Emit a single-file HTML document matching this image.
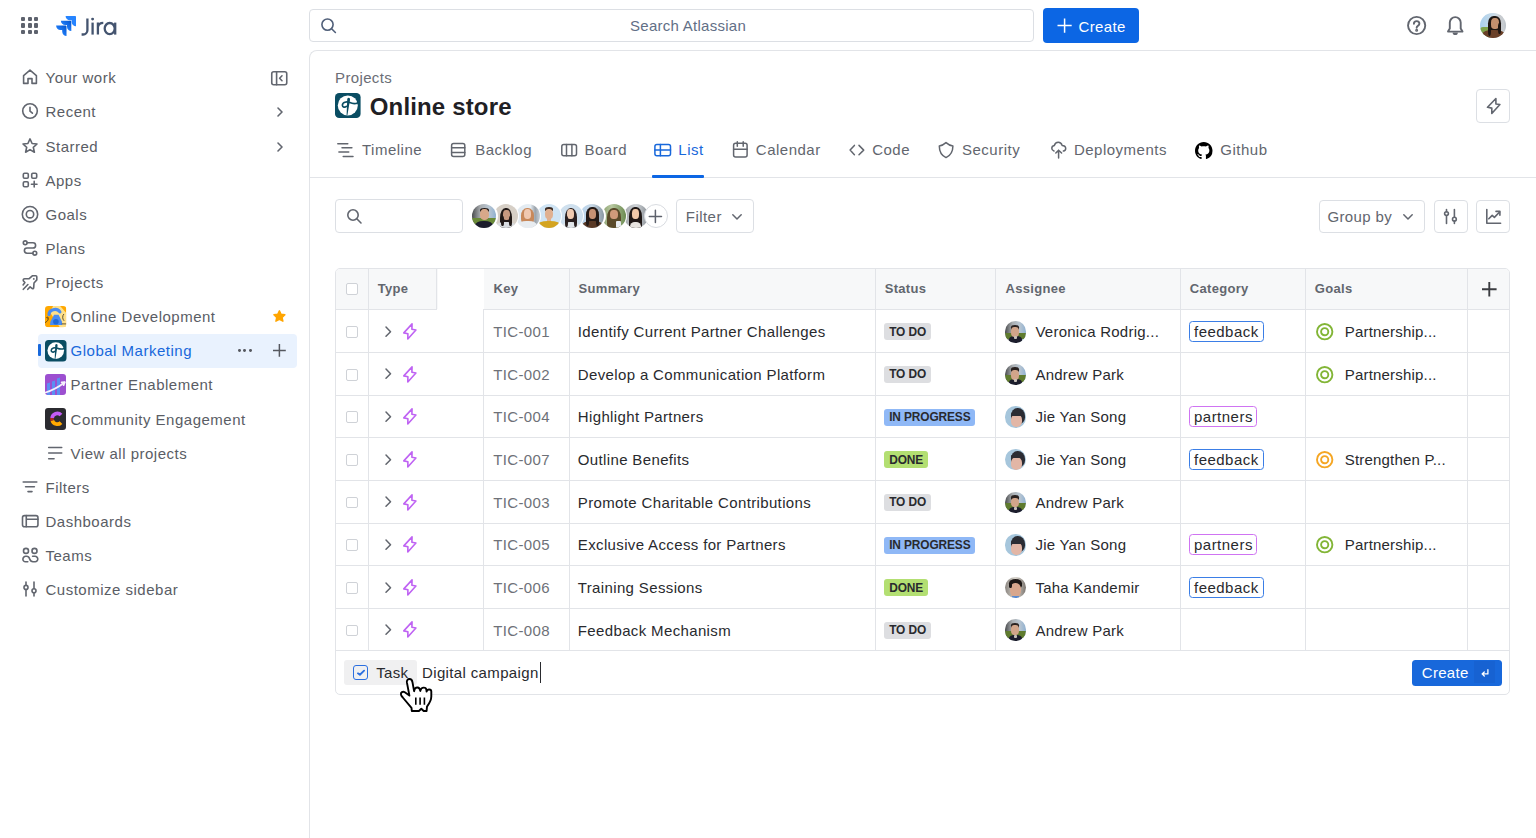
<!DOCTYPE html>
<html><head><meta charset="utf-8">
<style>
*{box-sizing:border-box;margin:0;padding:0}
html,body{width:1536px;height:838px;overflow:hidden;background:#fff;font-family:"Liberation Sans",sans-serif;color:#292a2e}
.a{position:absolute}
.t{position:absolute;white-space:nowrap;line-height:1}
svg{position:absolute;overflow:visible}
.ic{fill:none;stroke:#62666f;stroke-width:1.6;stroke-linecap:round;stroke-linejoin:round}
</style></head><body>

<div class="a" style="left:21.30px;top:17.00px;width:4.20px;height:4.20px;background:#5e636e;border-radius:1.1px"></div>
<div class="a" style="left:21.30px;top:23.45px;width:4.20px;height:4.20px;background:#5e636e;border-radius:1.1px"></div>
<div class="a" style="left:21.30px;top:29.90px;width:4.20px;height:4.20px;background:#5e636e;border-radius:1.1px"></div>
<div class="a" style="left:27.75px;top:17.00px;width:4.20px;height:4.20px;background:#5e636e;border-radius:1.1px"></div>
<div class="a" style="left:27.75px;top:23.45px;width:4.20px;height:4.20px;background:#5e636e;border-radius:1.1px"></div>
<div class="a" style="left:27.75px;top:29.90px;width:4.20px;height:4.20px;background:#5e636e;border-radius:1.1px"></div>
<div class="a" style="left:34.20px;top:17.00px;width:4.20px;height:4.20px;background:#5e636e;border-radius:1.1px"></div>
<div class="a" style="left:34.20px;top:23.45px;width:4.20px;height:4.20px;background:#5e636e;border-radius:1.1px"></div>
<div class="a" style="left:34.20px;top:29.90px;width:4.20px;height:4.20px;background:#5e636e;border-radius:1.1px"></div>
<svg class="" style="left:54.60px;top:15.80px;" width="21" height="20.5" viewBox="0 0 21 20.5">
<defs><linearGradient id="jg1" x1="1" y1="0" x2="0.3" y2="0.7"><stop offset="0" stop-color="#0052cc"/><stop offset="1" stop-color="#2684ff"/></linearGradient></defs>
<path d="M20.2 0 H10.6 a4.3 4.3 0 0 0 4.3 4.3 h1.8 v1.7 a4.3 4.3 0 0 0 4.3 4.3 V0.8 A0.8 0.8 0 0 0 20.2 0z" fill="#2684ff"/>
<path d="M15.5 4.8 H5.9 a4.3 4.3 0 0 0 4.3 4.3 h1.8 v1.7 a4.3 4.3 0 0 0 4.3 4.3 V5.6 A0.8 0.8 0 0 0 15.5 4.8z" fill="url(#jg1)"/>
<path d="M10.7 9.6 H1.1 a4.3 4.3 0 0 0 4.3 4.3 h1.8 v1.7 a4.3 4.3 0 0 0 4.3 4.3 V10.4 A0.8 0.8 0 0 0 10.7 9.6z" fill="url(#jg1)"/>
</svg>
<svg class="" style="left:0.00px;top:0.00px;fill:none;stroke:#44546f;stroke-width:2.3" width="130" height="45" viewBox="0 0 130 45"><path d="M87.4 18.4 V30.2 A4.3 4.3 0 0 1 83.1 34.5 H81.6"/><path d="M92.6 22.6 V34.6"/><circle cx="92.6" cy="19.1" r="1.45" fill="#44546f" stroke="none"/><path d="M97.9 34.6 V22.6 M97.9 27 C98.5 24.2 100.4 22.9 103.3 22.9"/><ellipse cx="109.7" cy="28.6" rx="5.0" ry="5.6"/><path d="M115.2 22.6 V34.6"/></svg>
<div class="a" style="left:309.20px;top:8.70px;width:724.80px;height:33.30px;border:1px solid #dcdfe4;border-radius:4px;background:#fff"></div>
<svg class="ic" style="left:321.00px;top:17.50px;stroke:#505f79" width="16" height="16" viewBox="0 0 16 16"><circle cx="6.5" cy="6.6" r="5.6"/><path d="M10.6 10.7 L14.4 14.5"/></svg>
<div class="t" style="left:630.00px;top:18.40px;font-size:15px;color:#626f86;font-weight:normal;letter-spacing:0.27px;">Search Atlassian</div>
<div class="a" style="left:1043.10px;top:8.20px;width:96.10px;height:34.60px;background:#0c66e4;border-radius:4px"></div>
<svg class="" style="left:1057.00px;top:18.00px;stroke:#fff;stroke-width:1.5;fill:none" width="15.2" height="15.2" viewBox="0 0 15.2 15.2"><path d="M7.6 0.5 V14.7 M0.5 7.6 H14.7"/></svg>
<div class="t" style="left:1078.60px;top:19.30px;font-size:15px;color:#ffffff;font-weight:normal;letter-spacing:0.35px;">Create</div>
<svg class="ic" style="left:1406.90px;top:15.90px;stroke-width:1.9" width="19.3" height="19" viewBox="0 0 19.3 19"><circle cx="9.65" cy="9.5" r="8.6"/><path d="M6.9 7.8 C6.9 6.2 8.1 5.1 9.65 5.1 C11.2 5.1 12.4 6.2 12.4 7.7 C12.4 9.6 9.65 9.9 9.65 11.7"/><circle cx="9.65" cy="14.3" r="0.55" fill="#62666f"/></svg>
<svg class="ic" style="left:1446.70px;top:15.90px;stroke-width:1.9" width="16.5" height="19" viewBox="0 0 16.5 19"><path d="M1 15.6 L2.8 12.6 V6.6 A5.45 5.45 0 0 1 13.7 6.6 V12.6 L15.5 15.6 Z"/><path d="M5.65 16.4 A2.6 2.6 0 0 0 10.85 16.4 Z" fill="#62666f" stroke="none"/></svg>
<div class="a" style="left:1480.4px;top:12.7px;width:25.7px;height:25.7px;border-radius:50%;overflow:hidden;background:linear-gradient(90deg,#a9d0ee 0%,#c9dbe8 50%,#d6d9dc 80%,#b9c0c6 100%)"><div class="a" style="left:0%;top:55%;width:40%;height:45%;border-radius:30%;background:#7ea24a"></div><div class="a" style="left:68%;top:10%;width:20%;height:70%;border-radius:10%;background:#c8ccd0"></div><div class="a" style="left:30%;top:12%;width:50%;height:62%;border-radius:45% 45% 30% 30%;background:#1e1612"></div><div class="a" style="left:42%;top:22%;width:30%;height:40%;border-radius:45%;background:#c4906e"></div><div class="a" style="left:8%;top:68%;width:88%;height:40%;border-radius:45% 45% 0 0;background:#6a4028"></div><div class="a" style="left:28%;top:40%;width:12%;height:50%;border-radius:40%;background:#1e1612"></div><div class="a" style="left:68%;top:40%;width:12%;height:44%;border-radius:40%;background:#1e1612"></div></div>
<div class="a" style="left:38.40px;top:333.90px;width:258.60px;height:33.80px;background:#e9f2fe;border-radius:4px"></div>
<div class="a" style="left:38.30px;top:344.10px;width:2.30px;height:12.40px;background:#1868db;border-radius:1px"></div>
<svg class="ic" style="left:21.60px;top:69.30px;" width="16" height="16" viewBox="0 0 16 16"><path d="M1.6 14.4 V6.6 L8 1.2 L14.4 6.6 V14.4 H10 V9.6 H6 V14.4 Z"/></svg>
<div class="t" style="left:45.50px;top:70.30px;font-size:15px;color:#5a5d65;font-weight:normal;letter-spacing:0.5px;">Your work</div>
<svg class="ic" style="left:21.60px;top:103.43px;" width="16" height="16" viewBox="0 0 16 16"><circle cx="8" cy="8" r="7.3"/><path d="M8 4.3 V8.2 L10.4 10.2"/></svg>
<div class="t" style="left:45.50px;top:104.43px;font-size:15px;color:#5a5d65;font-weight:normal;letter-spacing:0.5px;">Recent</div>
<svg class="ic" style="left:21.60px;top:137.56px;" width="16" height="16" viewBox="0 0 16 16"><path d="M8 0.9 L10.1 5.5 L15 6 L11.3 9.3 L12.4 14.2 L8 11.6 L3.6 14.2 L4.7 9.3 L1 6 L5.9 5.5 Z"/></svg>
<div class="t" style="left:45.50px;top:138.56px;font-size:15px;color:#5a5d65;font-weight:normal;letter-spacing:0.5px;">Starred</div>
<svg class="ic" style="left:21.60px;top:171.69px;" width="16" height="16" viewBox="0 0 16 16"><rect x="1.3" y="1.3" width="5" height="5" rx="1.2"/><rect x="9.7" y="1.3" width="5" height="5" rx="1.2"/><rect x="1.3" y="9.7" width="5" height="5" rx="1.2"/><path d="M12.2 9.4 V15 M9.4 12.2 H15"/></svg>
<div class="t" style="left:45.50px;top:172.69px;font-size:15px;color:#5a5d65;font-weight:normal;letter-spacing:0.5px;">Apps</div>
<svg class="ic" style="left:21.60px;top:205.82px;" width="16" height="16" viewBox="0 0 16 16"><circle cx="8" cy="8.2" r="7.7"/><circle cx="8" cy="8.2" r="3.7"/></svg>
<div class="t" style="left:45.50px;top:206.82px;font-size:15px;color:#5a5d65;font-weight:normal;letter-spacing:0.5px;">Goals</div>
<svg class="ic" style="left:21.60px;top:239.95px;" width="16" height="16" viewBox="0 0 16 16"><circle cx="3.2" cy="2.8" r="1.9"/><circle cx="12.8" cy="13.2" r="1.9"/><path d="M5.1 2.8 H11 a2.6 2.6 0 0 1 0 5.2 H5 a2.6 2.6 0 0 0 0 5.2 H10.9"/></svg>
<div class="t" style="left:45.50px;top:240.95px;font-size:15px;color:#5a5d65;font-weight:normal;letter-spacing:0.5px;">Plans</div>
<svg class="ic" style="left:21.60px;top:274.08px;" width="16" height="16" viewBox="0 0 16 16"><path d="M1.1 10.9 L2.9 8.5 L1.3 6.8 Q0.9 4.8 2.8 4.7 L6.9 4.8 L10.3 1.8 L13.8 1.7 Q14.8 1.7 14.8 2.8 L14.8 5.9 L12 9 L11.7 13.6 Q11.5 15.1 10.3 14.6 L8.1 12.9 L5.8 15.3"/><path d="M1.3 15.3 L5.9 10.5"/><circle cx="11.8" cy="4.9" r="0.9" fill="#5e626c" stroke="none"/></svg>
<div class="t" style="left:45.50px;top:275.08px;font-size:15px;color:#5a5d65;font-weight:normal;letter-spacing:0.5px;">Projects</div>
<svg class="" style="left:44.80px;top:305.61px;" width="21.3" height="21.3" viewBox="0 0 21.3 21.3"><defs><clipPath id="cp1"><rect x="0" y="0" width="21.3" height="21.3" rx="3.3"/></clipPath></defs><g clip-path="url(#cp1)"><rect x="0" y="0" width="21.3" height="21.3" fill="#ffa800"/><path d="M8 0 L15.1 0 L21.3 7.1 L21.3 21.3 L14.8 21.3 L5.1 6.4 Z" fill="#ffe08a"/><path d="M4 8.6 C4 3.9 11.6 1.3 14.9 5.9" fill="none" stroke="#4a8cf0" stroke-width="3.2" stroke-linecap="round"/><path d="M9.1 8.8 L13.6 8.8 L17 15.7 L17.2 19.1 L5 19.1 L5.4 15.7 Z" fill="#4a8cf0"/><circle cx="10.9" cy="15.7" r="2.8" fill="#1f6ad8"/><path d="M0.1 16.6 C2.1 15.6 3.9 13.6 3.1 11.6 C2.4 10.2 1.1 11.2 2.3 12.4 M18.9 8 C17.4 9.5 17.1 13 19.1 14.8 M16.7 17.9 H21.3" fill="none" stroke="#3a3020" stroke-width="0.8"/></g></svg>
<div class="t" style="left:70.60px;top:309.21px;font-size:15px;color:#5a5d65;font-weight:normal;letter-spacing:0.5px;">Online Development</div>
<svg class="" style="left:44.80px;top:339.74px;" width="21.5" height="21.5" viewBox="0 0 21.5 21.5"><rect x="0" y="0" width="21.5" height="21.5" rx="3.5" fill="#0a4d63"/><circle cx="10.75" cy="10.6" r="8.3" fill="#fff"/><path d="M11.4 4.1 C12.25 4.1 12.75 4.9 12.55 5.9 L10.4 19 L9.7 19 L10.2 5.9 C10.2 4.8 10.65 4.1 11.4 4.1 Z" fill="#0a4d63"/><path d="M19.3 8.3 C16.8 9.6 14.6 9.2 12.4 8.2 C9.7 7 6.2 7.9 6.2 10.4 C6.2 12.3 8.3 12.6 9.6 11.4" fill="none" stroke="#0a4d63" stroke-width="1.5" stroke-linecap="round"/></svg>
<div class="t" style="left:70.60px;top:343.34px;font-size:15px;color:#1868db;font-weight:normal;letter-spacing:0.5px;">Global Marketing</div>
<div class="a" style="left:44.8px;top:373.87px;width:21.5px;height:21.5px;border-radius:3px;overflow:hidden;background:#9c4fd0"><div class="a" style="left:2.5px;top:9px;width:3.2px;height:13px;background:#5b8ff2;transform:skewY(-20deg)"></div><div class="a" style="left:7.5px;top:7px;width:3.2px;height:15px;background:#5b8ff2;transform:skewY(-20deg)"></div><div class="a" style="left:12.5px;top:4px;width:3.2px;height:18px;background:#5b8ff2;transform:skewY(-20deg)"></div></div>
<svg class="" style="left:44.80px;top:373.87px;fill:none;stroke:#f6f0fc;stroke-width:1.7;stroke-linecap:round;stroke-linejoin:round" width="21.5" height="21.5" viewBox="0 0 21.5 21.5"><path d="M0.5 18.5 C7 16.5 13 13.5 19.5 8.5"/><path d="M16.6 8.4 L19.8 8.2 L18.6 11.2" /></svg>
<div class="t" style="left:70.60px;top:377.47px;font-size:15px;color:#5a5d65;font-weight:normal;letter-spacing:0.5px;">Partner Enablement</div>
<div class="a" style="left:44.8px;top:408.00px;width:21.5px;height:21.5px;border-radius:3px;background:#2b2b30"></div>
<svg class="" style="left:44.80px;top:408.00px;fill:none;stroke-width:3.7;stroke-linecap:butt" width="21.5" height="21.5" viewBox="0 0 21.5 21.5"><path d="M16 7.1 A5.15 5.15 0 0 0 7.1 10.12" stroke="#c45cf6"/><path d="M7.1 10.12 A5.15 5.15 0 0 0 7.36 12.6" stroke="#b8291a"/><path d="M7.36 12.6 A5.15 5.15 0 0 0 16 14.6" stroke="#ffa800"/></svg>
<div class="t" style="left:70.60px;top:411.60px;font-size:15px;color:#5a5d65;font-weight:normal;letter-spacing:0.5px;">Community Engagement</div>
<svg class="ic" style="left:47.30px;top:444.93px;" width="16" height="16" viewBox="0 0 16 16"><path d="M1.7 2.47 H14.7 M1.7 7.97 H14.7 M1.7 13.77 H7.05"/></svg>
<div class="t" style="left:70.60px;top:445.73px;font-size:15px;color:#5a5d65;font-weight:normal;letter-spacing:0.5px;">View all projects</div>
<svg class="ic" style="left:21.60px;top:478.86px;" width="16" height="16" viewBox="0 0 16 16"><path d="M1.2 3 H14.8 M3.6 7.8 H12.4 M6 12.6 H10"/></svg>
<div class="t" style="left:45.50px;top:479.86px;font-size:15px;color:#5a5d65;font-weight:normal;letter-spacing:0.5px;">Filters</div>
<svg class="ic" style="left:21.60px;top:512.99px;" width="16" height="16" viewBox="0 0 16 16"><rect x="0.5" y="2.64" width="15.45" height="11.16" rx="2"/><path d="M4.27 2.64 V13.8 M4.27 6.3 H15.95"/></svg>
<div class="t" style="left:45.50px;top:513.99px;font-size:15px;color:#5a5d65;font-weight:normal;letter-spacing:0.5px;">Dashboards</div>
<svg class="ic" style="left:21.60px;top:547.12px;" width="16" height="16" viewBox="0 0 16 16"><circle cx="4" cy="3.9" r="2.5"/><circle cx="12.5" cy="3.9" r="2.5"/><path d="M5.8 14.7 H3.4 A2.5 2.5 0 0 1 0.9 12.2 A2.9 2.9 0 0 1 3.8 9.3 H4.6 C6.6 9.3 7.2 10.5 7.7 12 C8.2 13.6 8.9 14.7 11 14.7 H13.2 A2.6 2.6 0 0 0 15.8 12.1 A2.8 2.8 0 0 0 13 9.3 H10.6"/></svg>
<div class="t" style="left:45.50px;top:548.12px;font-size:15px;color:#5a5d65;font-weight:normal;letter-spacing:0.5px;">Teams</div>
<svg class="ic" style="left:21.60px;top:581.25px;" width="16" height="16" viewBox="0 0 16 16"><path d="M4 1 V4.2 M4 8.6 V15 M12 1 V7.6 M12 12 V15"/><circle cx="4" cy="6.4" r="2"/><circle cx="12" cy="9.8" r="2"/></svg>
<div class="t" style="left:45.50px;top:582.25px;font-size:15px;color:#5a5d65;font-weight:normal;letter-spacing:0.5px;">Customize sidebar</div>
<svg class="ic" style="left:270.60px;top:70.50px;" width="16.5" height="14.5" viewBox="0 0 16.5 14.5"><rect x="0.75" y="0.75" width="15" height="13" rx="2"/><path d="M5.6 0.75 V13.75 M11 4.8 L8.6 7.25 L11 9.7"/></svg>
<svg class="ic" style="left:276.50px;top:107.43px;" width="6" height="10" viewBox="0 0 6 10"><path d="M1 1 L5 5 L1 9"/></svg>
<svg class="ic" style="left:276.50px;top:141.56px;" width="6" height="10" viewBox="0 0 6 10"><path d="M1 1 L5 5 L1 9"/></svg>
<svg class="" style="left:273.10px;top:309.60px;fill:#ffa500;stroke:#ffa500;stroke-width:1.4;stroke-linejoin:round" width="12.8" height="12.6" viewBox="0 0 12.8 12.6"><path d="M6.4 0.8 L8.1 4.3 L11.9 4.8 L9.1 7.4 L9.9 11.2 L6.4 9.3 L2.9 11.2 L3.7 7.4 L0.9 4.8 L4.7 4.3 Z"/></svg>
<div class="a" style="left:237.75px;top:349.15px;width:2.90px;height:2.90px;background:#55585f;border-radius:50%"></div>
<div class="a" style="left:243.45px;top:349.15px;width:2.90px;height:2.90px;background:#55585f;border-radius:50%"></div>
<div class="a" style="left:249.15px;top:349.15px;width:2.90px;height:2.90px;background:#55585f;border-radius:50%"></div>
<svg class="ic" style="left:273.00px;top:344.40px;stroke:#55585f;stroke-width:1.5;stroke-linecap:butt" width="12.8" height="12.8" viewBox="0 0 12.8 12.8"><path d="M6.4 0 V12.8 M0 6.4 H12.8"/></svg>
<div class="a" style="left:309.2px;top:50.1px;width:1300px;height:900px;border-left:1px solid #e2e4e8;border-top:1px solid #e2e4e8;border-radius:8px 0 0 0"></div>
<div class="t" style="left:335.10px;top:70.10px;font-size:15px;color:#6b6e76;font-weight:normal;letter-spacing:0.35px;">Projects</div>
<svg class="" style="left:335.10px;top:92.80px;" width="25.6" height="25.1" viewBox="0 0 25.6 25.1"><rect x="0" y="0" width="25.6" height="25.1" rx="4.2" fill="#0a4d63"/><circle cx="12.8" cy="12.4" r="10" fill="#fff"/><path d="M13.6 4.8 C14.6 4.8 15.2 5.7 15 6.9 L12.4 22.2 L11.6 22.2 L12.2 6.9 C12.2 5.6 12.8 4.8 13.6 4.8 Z" fill="#0a4d63"/><path d="M23 9.7 C20 11.3 17.4 10.8 14.8 9.6 C11.6 8.2 7.4 9.2 7.4 12.2 C7.4 14.4 9.9 14.8 11.4 13.3" fill="none" stroke="#0a4d63" stroke-width="1.7" stroke-linecap="round"/></svg>
<div class="t" style="left:369.80px;top:95.48px;font-size:24px;color:#1f2024;font-weight:bold;letter-spacing:0.15px;">Online store</div>
<div class="a" style="left:1476.40px;top:88.80px;width:34.00px;height:33.80px;border:1px solid #dcdfe4;border-radius:4px;background:#fff"></div>
<svg class="ic" style="left:1485.50px;top:97.50px;stroke-width:1.6" width="15" height="16" viewBox="0 0 15 16"><path d="M9.9 0.5 L9.9 6.06 L13.9 6.5 L5.8 15.5 L5.8 10.1 L1.5 9.3 Z"/></svg>
<svg class="ic" style="left:337.20px;top:143.20px;stroke:#62666e;stroke-width:1.5" width="17" height="15" viewBox="0 0 17 15"><path d="M0.8 0.7 H10.8 M5 4.8 H14.9 M1.9 9.1 H11.75 M6.2 13.4 H16"/></svg>
<div class="t" style="left:362.00px;top:142.30px;font-size:15px;color:#62666e;font-weight:normal;letter-spacing:0.5px;">Timeline</div>
<svg class="ic" style="left:451.40px;top:143.20px;stroke:#62666e;stroke-width:1.5" width="17" height="16" viewBox="0 0 17 16"><rect x="0.6" y="0.5" width="13.2" height="13.1" rx="2"/><path d="M0.6 4.7 H13.8 M0.6 9.4 H13.8"/></svg>
<div class="t" style="left:475.20px;top:142.30px;font-size:15px;color:#62666e;font-weight:normal;letter-spacing:0.5px;">Backlog</div>
<svg class="ic" style="left:559.50px;top:143.20px;stroke:#62666e;stroke-width:1.5" width="17" height="16" viewBox="0 0 17 16"><rect x="1.8" y="1.4" width="14.7" height="11.4" rx="2"/><path d="M6.5 1.4 V12.8 M11.9 1.4 V12.8"/></svg>
<div class="t" style="left:584.50px;top:142.30px;font-size:15px;color:#62666e;font-weight:normal;letter-spacing:0.5px;">Board</div>
<svg class="ic" style="left:653.70px;top:143.20px;stroke:#1868db;stroke-width:1.5" width="17" height="16" viewBox="0 0 17 16"><rect x="0.9" y="1.4" width="15.6" height="11.4" rx="2"/><path d="M0.9 6.9 H16.5 M6.4 1.4 V12.8"/></svg>
<div class="t" style="left:678.30px;top:142.30px;font-size:15px;color:#1868db;font-weight:normal;letter-spacing:0.5px;">List</div>
<svg class="ic" style="left:733.00px;top:143.20px;stroke:#62666e;stroke-width:1.5" width="17" height="16" viewBox="0 0 17 16"><rect x="0.6" y="0.25" width="13.5" height="13.65" rx="2"/><path d="M0.6 6.3 H14.1 M4.3 -1.15 V3.2 M10.2 -1.15 V3.2"/></svg>
<div class="t" style="left:755.80px;top:142.30px;font-size:15px;color:#62666e;font-weight:normal;letter-spacing:0.5px;">Calendar</div>
<svg class="ic" style="left:848.80px;top:143.20px;stroke:#62666e;stroke-width:1.5" width="17" height="16" viewBox="0 0 17 16"><path d="M5.4 2.4 L1.1 7.1 L5.4 11.7 M10 2.4 L14.7 7.1 L10 11.7"/></svg>
<div class="t" style="left:872.20px;top:142.30px;font-size:15px;color:#62666e;font-weight:normal;letter-spacing:0.5px;">Code</div>
<svg class="ic" style="left:938.20px;top:142.20px;stroke:#62666e;stroke-width:1.5" width="17" height="16" viewBox="0 0 17 16"><path d="M8 0.6 C6 2.4 4 3.5 1.3 3.9 C1.3 9.5 3.5 13.4 8 15.6 C12.5 13.4 14.9 9.5 14.9 3.9 C12 3.5 10 2.4 8 0.6 Z"/></svg>
<div class="t" style="left:962.00px;top:142.30px;font-size:15px;color:#62666e;font-weight:normal;letter-spacing:0.5px;">Security</div>
<svg class="ic" style="left:1050.50px;top:142.20px;stroke:#62666e;stroke-width:1.5" width="17" height="16" viewBox="0 0 17 16"><path d="M2.95 9.0 C1.6 8.6 0.8 7.6 0.8 6.3 C0.8 4.8 1.9 3.7 3.3 3.5 C3.8 1.5 5.2 0.2 7.2 0.2 C9.2 0.2 10.6 1.5 11.1 3.4 C13 3.5 14.7 4.6 14.7 6.4 C14.7 7.8 13.8 8.7 12.4 9.0"/><path d="M7.6 8.3 V16 M4.8 11 L7.6 8.2 L10.6 11"/></svg>
<div class="t" style="left:1073.90px;top:142.30px;font-size:15px;color:#62666e;font-weight:normal;letter-spacing:0.5px;">Deployments</div>
<svg class="" style="left:1195.40px;top:142.20px;" width="17.5" height="17.5" viewBox="0 0 16 16"><path fill="#000" d="M8 0C3.58 0 0 3.58 0 8c0 3.54 2.29 6.53 5.47 7.59.4.07.55-.17.55-.38 0-.19-.01-.82-.01-1.49-2.01.37-2.53-.49-2.69-.94-.09-.23-.48-.94-.82-1.13-.28-.15-.68-.52-.01-.53.63-.01 1.08.58 1.23.82.72 1.21 1.87.87 2.33.66.07-.52.28-.87.51-1.07-1.78-.2-3.64-.89-3.64-3.95 0-.87.31-1.59.82-2.15-.08-.2-.36-1.02.08-2.12 0 0 .67-.21 2.2.82.64-.18 1.32-.27 2-.27.68 0 1.36.09 2 .27 1.53-1.04 2.2-.82 2.2-.82.44 1.1.16 1.92.08 2.12.51.56.82 1.27.82 2.15 0 3.07-1.87 3.75-3.65 3.95.29.25.54.73.54 1.48 0 1.07-.01 1.93-.01 2.2 0 .21.15.46.55.38A8.013 8.013 0 0016 8c0-4.42-3.58-8-8-8z"/></svg>
<div class="t" style="left:1220.30px;top:142.30px;font-size:15px;color:#62666e;font-weight:normal;letter-spacing:0.5px;">Github</div>
<div class="a" style="left:310.00px;top:177.00px;width:1226.00px;height:1.00px;background:#e2e4e8"></div>
<div class="a" style="left:651.70px;top:175.00px;width:52.30px;height:3.00px;background:#0c66e4;border-radius:1px"></div>
<div class="a" style="left:335.20px;top:199.40px;width:127.60px;height:33.60px;border:1px solid #dcdfe4;border-radius:4px;background:#fff"></div>
<svg class="ic" style="left:346.50px;top:208.70px;stroke-width:1.6" width="15" height="15" viewBox="0 0 15 15"><circle cx="6" cy="6" r="5.2"/><path d="M9.8 9.8 L14 14"/></svg>
<div class="a" style="left:622.40px;top:203.00px;width:26.40px;height:26.40px;border-radius:50%;background:#fff;padding:1.2px"><div style="position:relative;width:24.00px;height:24.00px;border-radius:50%;overflow:hidden;background:linear-gradient(90deg,#a0a4a8 0%,#d0d4d8 50%,#8a9096 100%)"><div class="a" style="left:24%;top:12%;width:52%;height:90%;border-radius:45% 45% 20% 20%;background:#201816"></div><div class="a" style="left:36%;top:22%;width:28%;height:40%;border-radius:45%;background:#f0c8a8"></div><div class="a" style="left:28%;top:76%;width:44%;height:40%;border-radius:45% 45% 0 0;background:#e8e4e0"></div></div></div>
<div class="a" style="left:600.80px;top:203.00px;width:26.40px;height:26.40px;border-radius:50%;background:#fff;padding:1.2px"><div style="position:relative;width:24.00px;height:24.00px;border-radius:50%;overflow:hidden;background:linear-gradient(90deg,#8aa070 0%,#b8c8a0 40%,#6a8a50 100%)"><div class="a" style="left:22%;top:16%;width:56%;height:90%;border-radius:45% 45% 30% 30%;background:#5a4a2a"></div><div class="a" style="left:35%;top:25%;width:30%;height:38%;border-radius:45%;background:#d09a7a"></div><div class="a" style="left:60%;top:70%;width:18%;height:30%;border-radius:20%;background:#e8ecf0"></div></div></div>
<div class="a" style="left:579.20px;top:203.00px;width:26.40px;height:26.40px;border-radius:50%;background:#fff;padding:1.2px"><div style="position:relative;width:24.00px;height:24.00px;border-radius:50%;overflow:hidden;background:linear-gradient(90deg,#b8d4ee 0%,#c8d8e6 50%,#8a98a4 100%)"><div class="a" style="left:24%;top:12%;width:54%;height:70%;border-radius:45% 45% 30% 30%;background:#241a16"></div><div class="a" style="left:36%;top:22%;width:30%;height:40%;border-radius:45%;background:#c89274"></div><div class="a" style="left:8%;top:70%;width:86%;height:40%;border-radius:45% 45% 0 0;background:#5a3a26"></div><div class="a" style="left:24%;top:44%;width:14%;height:46%;border-radius:40%;background:#241a16"></div><div class="a" style="left:64%;top:44%;width:14%;height:46%;border-radius:40%;background:#241a16"></div></div></div>
<div class="a" style="left:557.60px;top:203.00px;width:26.40px;height:26.40px;border-radius:50%;background:#fff;padding:1.2px"><div style="position:relative;width:24.00px;height:24.00px;border-radius:50%;overflow:hidden;background:#cfe0ee"><div class="a" style="left:24%;top:14%;width:52%;height:90%;border-radius:45% 45% 20% 20%;background:#2a2020"></div><div class="a" style="left:36%;top:22%;width:28%;height:40%;border-radius:45%;background:#f0cab0"></div><div class="a" style="left:12%;top:76%;width:76%;height:40%;border-radius:45% 45% 0 0;background:#e2e6ea"></div><div class="a" style="left:24%;top:48%;width:14%;height:48%;border-radius:40%;background:#2a2020"></div><div class="a" style="left:62%;top:48%;width:14%;height:48%;border-radius:40%;background:#2a2020"></div></div></div>
<div class="a" style="left:536.00px;top:203.00px;width:26.40px;height:26.40px;border-radius:50%;background:#fff;padding:1.2px"><div style="position:relative;width:24.00px;height:24.00px;border-radius:50%;overflow:hidden;background:#cfe4f4"><div class="a" style="left:33%;top:12%;width:34%;height:18%;border-radius:50% 50% 20% 20%;background:#3a2a22"></div><div class="a" style="left:33%;top:18%;width:33%;height:42%;border-radius:45%;background:#e0b090"></div><div class="a" style="left:42%;top:55%;width:16%;height:20%;border-radius:20%;background:#e0b090"></div><div class="a" style="left:0%;top:72%;width:100%;height:40%;border-radius:45% 45% 0 0;background:#d4a420"></div></div></div>
<div class="a" style="left:514.40px;top:203.00px;width:26.40px;height:26.40px;border-radius:50%;background:#fff;padding:1.2px"><div style="position:relative;width:24.00px;height:24.00px;border-radius:50%;overflow:hidden;background:linear-gradient(90deg,#dfe8f0 0%,#e6eef4 60%,#9aa2aa 80%,#c8d0d8 100%)"><div class="a" style="left:22%;top:14%;width:56%;height:70%;border-radius:45% 45% 30% 30%;background:#c8885a"></div><div class="a" style="left:35%;top:22%;width:30%;height:40%;border-radius:45%;background:#f0c8b0"></div><div class="a" style="left:12%;top:72%;width:76%;height:40%;border-radius:45% 45% 0 0;background:#e8ecf0"></div></div></div>
<div class="a" style="left:492.80px;top:203.00px;width:26.40px;height:26.40px;border-radius:50%;background:#fff;padding:1.2px"><div style="position:relative;width:24.00px;height:24.00px;border-radius:50%;overflow:hidden;background:#d6cfc6"><div class="a" style="left:26%;top:16%;width:50%;height:90%;border-radius:45% 45% 20% 20%;background:#221a18"></div><div class="a" style="left:38%;top:26%;width:28%;height:40%;border-radius:45%;background:#c89a80"></div><div class="a" style="left:10%;top:74%;width:80%;height:40%;border-radius:45% 45% 0 0;background:#d8dce0"></div><div class="a" style="left:28%;top:50%;width:12%;height:40%;border-radius:40%;background:#221a18"></div><div class="a" style="left:64%;top:50%;width:12%;height:40%;border-radius:40%;background:#221a18"></div></div></div>
<div class="a" style="left:471.20px;top:203.00px;width:26.40px;height:26.40px;border-radius:50%;background:#fff;padding:1.2px"><div style="position:relative;width:24.00px;height:24.00px;border-radius:50%;overflow:hidden;background:linear-gradient(90deg,#4a4c4f 0%,#a9adb0 35%,#b9c6d2 70%,#8fb0d0 100%)"><div class="a" style="left:0%;top:58%;width:100%;height:24%;border-radius:0;background:#6a8a38"></div><div class="a" style="left:12%;top:68%;width:76%;height:40%;border-radius:45% 45% 0 0;background:#1c1d2c"></div><div class="a" style="left:30%;top:14%;width:38%;height:20%;border-radius:50% 50% 20% 20%;background:#241c1a"></div><div class="a" style="left:32%;top:22%;width:36%;height:46%;border-radius:45%;background:#d8a88a"></div></div></div>
<div class="a" style="left:643.50px;top:203.90px;width:24.40px;height:24.40px;border:1px solid #d9dce1;border-radius:50%;background:#fff"></div>
<svg class="ic" style="left:648.60px;top:210.20px;stroke:#5e626c;stroke-width:1.5" width="12.8" height="12.8" viewBox="0 0 12.8 12.8"><path d="M6.4 0.3 V12.5 M0.3 6.4 H12.5"/></svg>
<div class="a" style="left:676.40px;top:199.40px;width:77.30px;height:33.70px;border:1px solid #dcdfe4;border-radius:4px;background:#fff"></div>
<div class="t" style="left:685.80px;top:209.10px;font-size:15px;color:#62666e;font-weight:normal;letter-spacing:0.45px;">Filter</div>
<svg class="ic" style="left:732.00px;top:214.00px;stroke-width:1.5" width="10" height="6" viewBox="0 0 10 6"><path d="M0.8 0.8 L5 5 L9.2 0.8"/></svg>
<div class="a" style="left:1318.70px;top:199.60px;width:106.10px;height:33.50px;border:1px solid #dcdfe4;border-radius:4px;background:#fff"></div>
<div class="t" style="left:1327.50px;top:208.80px;font-size:15px;color:#62666e;font-weight:normal;letter-spacing:0.35px;">Group by</div>
<svg class="ic" style="left:1403.20px;top:214.20px;stroke-width:1.5" width="10" height="6" viewBox="0 0 10 6"><path d="M0.8 0.8 L5 5 L9.2 0.8"/></svg>
<div class="a" style="left:1434.20px;top:199.60px;width:33.40px;height:33.50px;border:1px solid #dcdfe4;border-radius:4px;background:#fff"></div>
<svg class="ic" style="left:1444.20px;top:209.00px;stroke-width:1.6" width="14" height="15" viewBox="0 0 14 15"><path d="M2.5 0.5 V2.7 M2.5 6.5 V14.5 M10.4 0.5 V8.3 M10.4 12.1 V14.5"/><circle cx="2.5" cy="4.6" r="1.9"/><circle cx="10.4" cy="10.2" r="1.9"/></svg>
<div class="a" style="left:1476.20px;top:199.60px;width:33.60px;height:33.50px;border:1px solid #dcdfe4;border-radius:4px;background:#fff"></div>
<svg class="ic" style="left:1486.00px;top:209.00px;stroke-width:1.6" width="15" height="15" viewBox="0 0 15 15"><path d="M0.8 0.5 V14.2 H14.6"/><path d="M2.8 9.8 L6.2 6.4 L8.4 8.4 L13.6 3"/><path d="M10 2.4 H13.9 V6.3"/></svg>
<div class="a" style="left:335.25px;top:267.9px;width:1174.45px;height:426.70px;border:1px solid #e2e4e8;border-radius:5px;background:#fff;overflow:hidden"><div class="a" style="left:0;top:0;width:101.25px;height:40.40px;background:#f7f8f9"></div><div class="a" style="left:147.55px;top:0;width:1200px;height:40.40px;background:#f7f8f9"></div></div>
<div class="a" style="left:335.25px;top:309.30px;width:101.25px;height:1.00px;background:#e2e4e8"></div>
<div class="a" style="left:483.80px;top:309.30px;width:1025.90px;height:1.00px;background:#e2e4e8"></div>
<div class="a" style="left:368.40px;top:267.90px;width:1.00px;height:41.40px;background:#e2e4e8"></div>
<div class="a" style="left:436.00px;top:267.90px;width:1.00px;height:41.40px;background:#e2e4e8"></div>
<div class="a" style="left:568.50px;top:267.90px;width:1.00px;height:41.40px;background:#e2e4e8"></div>
<div class="a" style="left:874.90px;top:267.90px;width:1.00px;height:41.40px;background:#e2e4e8"></div>
<div class="a" style="left:994.90px;top:267.90px;width:1.00px;height:41.40px;background:#e2e4e8"></div>
<div class="a" style="left:1179.90px;top:267.90px;width:1.00px;height:41.40px;background:#e2e4e8"></div>
<div class="a" style="left:1304.90px;top:267.90px;width:1.00px;height:41.40px;background:#e2e4e8"></div>
<div class="a" style="left:1467.00px;top:267.90px;width:1.00px;height:41.40px;background:#e2e4e8"></div>
<div class="a" style="left:335.25px;top:351.94px;width:1174.45px;height:1.00px;background:#e2e4e8"></div>
<div class="a" style="left:335.25px;top:394.58px;width:1174.45px;height:1.00px;background:#e2e4e8"></div>
<div class="a" style="left:335.25px;top:437.22px;width:1174.45px;height:1.00px;background:#e2e4e8"></div>
<div class="a" style="left:335.25px;top:479.86px;width:1174.45px;height:1.00px;background:#e2e4e8"></div>
<div class="a" style="left:335.25px;top:522.50px;width:1174.45px;height:1.00px;background:#e2e4e8"></div>
<div class="a" style="left:335.25px;top:565.14px;width:1174.45px;height:1.00px;background:#e2e4e8"></div>
<div class="a" style="left:335.25px;top:607.78px;width:1174.45px;height:1.00px;background:#e2e4e8"></div>
<div class="a" style="left:335.25px;top:650.42px;width:1174.45px;height:1.00px;background:#e2e4e8"></div>
<div class="a" style="left:368.40px;top:309.30px;width:1.00px;height:341.12px;background:#e2e4e8"></div>
<div class="a" style="left:483.30px;top:309.30px;width:1.00px;height:341.12px;background:#e2e4e8"></div>
<div class="a" style="left:568.50px;top:309.30px;width:1.00px;height:341.12px;background:#e2e4e8"></div>
<div class="a" style="left:874.90px;top:309.30px;width:1.00px;height:341.12px;background:#e2e4e8"></div>
<div class="a" style="left:994.90px;top:309.30px;width:1.00px;height:341.12px;background:#e2e4e8"></div>
<div class="a" style="left:1179.90px;top:309.30px;width:1.00px;height:341.12px;background:#e2e4e8"></div>
<div class="a" style="left:1304.90px;top:309.30px;width:1.00px;height:341.12px;background:#e2e4e8"></div>
<div class="a" style="left:1467.00px;top:309.30px;width:1.00px;height:341.12px;background:#e2e4e8"></div>
<div class="t" style="left:377.80px;top:282.30px;font-size:13px;color:#62666e;font-weight:bold;letter-spacing:0.3px;">Type</div>
<div class="t" style="left:493.60px;top:282.30px;font-size:13px;color:#62666e;font-weight:bold;letter-spacing:0.3px;">Key</div>
<div class="t" style="left:578.60px;top:282.30px;font-size:13px;color:#62666e;font-weight:bold;letter-spacing:0.3px;">Summary</div>
<div class="t" style="left:884.70px;top:282.30px;font-size:13px;color:#62666e;font-weight:bold;letter-spacing:0.3px;">Status</div>
<div class="t" style="left:1005.60px;top:282.30px;font-size:13px;color:#62666e;font-weight:bold;letter-spacing:0.3px;">Assignee</div>
<div class="t" style="left:1189.80px;top:282.30px;font-size:13px;color:#62666e;font-weight:bold;letter-spacing:0.3px;">Category</div>
<div class="t" style="left:1314.80px;top:282.30px;font-size:13px;color:#62666e;font-weight:bold;letter-spacing:0.3px;">Goals</div>
<div class="a" style="left:346.30px;top:283.30px;width:11.80px;height:11.80px;border:1.5px solid #cfd2d7;border-radius:2px;background:#fff"></div>
<svg class="ic" style="left:1481.80px;top:281.50px;stroke:#3b3c41;stroke-width:1.9;stroke-linecap:butt" width="14.6" height="14.6" viewBox="0 0 14.6 14.6"><path d="M7.3 0 V14.6 M0 7.3 H14.6"/></svg>
<div class="a" style="left:346.30px;top:326.10px;width:11.80px;height:11.80px;border:1.5px solid #cfd2d7;border-radius:2px;background:#fff"></div>
<svg class="ic" style="left:386.45px;top:326.70px;stroke:#62666e;stroke-width:1.5" width="5" height="9.5" viewBox="0 0 5 9.5"><path d="M0 0 L4.55 4.8 L0 9.3"/></svg>
<svg class="ic" style="left:402.60px;top:323.00px;stroke:#bf63f3;stroke-width:1.6" width="14" height="17" viewBox="0 0 14 17"><path d="M9.06 0.9 L8.9 6.17 L12.9 7.03 L4.8 16 L4.9 10.75 L0.8 9.9 Z"/></svg>
<div class="t" style="left:493.20px;top:324.10px;font-size:15px;color:#6e7178;font-weight:normal;letter-spacing:0.38px;">TIC-001</div>
<div class="t" style="left:577.80px;top:324.10px;font-size:15px;color:#292a2e;font-weight:normal;letter-spacing:0.36px;">Identify Current Partner Challenges</div>
<div class="a" style="left:884.1px;top:323.30px;width:47px;height:17px;border-radius:3px;background:#dddee1"></div>
<div class="t" style="left:889.20px;top:326.73px;font-size:11.9px;color:#292a2e;font-weight:bold;letter-spacing:-0.12px;">TO DO</div>
<div class="a" style="left:1004.60px;top:321.00px;width:21.50px;height:21.50px;border-radius:50%;overflow:hidden;background:linear-gradient(90deg,#4a4c4f 0%,#a9adb0 35%,#b9c6d2 70%,#8fb0d0 100%)"><div class="a" style="left:0%;top:55%;width:100%;height:30%;border-radius:0;background:#5f7b2e;"></div><div class="a" style="left:22%;top:70%;width:60%;height:40%;border-radius:40% 40% 0 0;background:#1c1d2c;"></div><div class="a" style="left:30%;top:18%;width:36%;height:22%;border-radius:50% 50% 20% 20%;background:#2a2220;"></div><div class="a" style="left:32%;top:28%;width:34%;height:46%;border-radius:45%;background:#d2a58a;"></div><div class="a" style="left:42%;top:72%;width:14%;height:14%;border-radius:30%;background:#c8c0b8;"></div></div>
<div class="t" style="left:1035.40px;top:324.10px;font-size:15px;color:#292a2e;font-weight:normal;letter-spacing:0.25px;">Veronica Rodrig...</div>
<div class="a" style="left:1189.3px;top:321.10px;width:74.5px;height:21px;border:1.7px solid #3b7ee6;border-radius:3.5px"></div>
<div class="t" style="left:1194.00px;top:324.10px;font-size:15px;color:#292a2e;font-weight:normal;letter-spacing:0.48px;">feedback</div>
<svg class="" style="left:1316.10px;top:323.00px;fill:none;stroke:#82b536;stroke-width:1.9" width="17.4" height="17.4" viewBox="0 0 17.4 17.4"><circle cx="8.7" cy="8.7" r="7.7"/><circle cx="8.7" cy="8.7" r="3.6"/></svg>
<div class="t" style="left:1344.70px;top:324.10px;font-size:15px;color:#292a2e;font-weight:normal;letter-spacing:0.2px;">Partnership...</div>
<div class="a" style="left:346.30px;top:368.74px;width:11.80px;height:11.80px;border:1.5px solid #cfd2d7;border-radius:2px;background:#fff"></div>
<svg class="ic" style="left:386.45px;top:369.34px;stroke:#62666e;stroke-width:1.5" width="5" height="9.5" viewBox="0 0 5 9.5"><path d="M0 0 L4.55 4.8 L0 9.3"/></svg>
<svg class="ic" style="left:402.60px;top:365.64px;stroke:#bf63f3;stroke-width:1.6" width="14" height="17" viewBox="0 0 14 17"><path d="M9.06 0.9 L8.9 6.17 L12.9 7.03 L4.8 16 L4.9 10.75 L0.8 9.9 Z"/></svg>
<div class="t" style="left:493.20px;top:366.74px;font-size:15px;color:#6e7178;font-weight:normal;letter-spacing:0.38px;">TIC-002</div>
<div class="t" style="left:577.80px;top:366.74px;font-size:15px;color:#292a2e;font-weight:normal;letter-spacing:0.36px;">Develop a Communication Platform</div>
<div class="a" style="left:884.1px;top:365.94px;width:47px;height:17px;border-radius:3px;background:#dddee1"></div>
<div class="t" style="left:889.20px;top:369.37px;font-size:11.9px;color:#292a2e;font-weight:bold;letter-spacing:-0.12px;">TO DO</div>
<div class="a" style="left:1004.60px;top:363.64px;width:21.50px;height:21.50px;border-radius:50%;overflow:hidden;background:linear-gradient(90deg,#4a4c4f 0%,#a9adb0 35%,#b9c6d2 70%,#8fb0d0 100%)"><div class="a" style="left:0%;top:55%;width:100%;height:30%;border-radius:0;background:#5f7b2e;"></div><div class="a" style="left:22%;top:70%;width:60%;height:40%;border-radius:40% 40% 0 0;background:#1c1d2c;"></div><div class="a" style="left:30%;top:18%;width:36%;height:22%;border-radius:50% 50% 20% 20%;background:#2a2220;"></div><div class="a" style="left:32%;top:28%;width:34%;height:46%;border-radius:45%;background:#d2a58a;"></div><div class="a" style="left:42%;top:72%;width:14%;height:14%;border-radius:30%;background:#c8c0b8;"></div></div>
<div class="t" style="left:1035.40px;top:366.74px;font-size:15px;color:#292a2e;font-weight:normal;letter-spacing:0.25px;">Andrew Park</div>
<svg class="" style="left:1316.10px;top:365.64px;fill:none;stroke:#82b536;stroke-width:1.9" width="17.4" height="17.4" viewBox="0 0 17.4 17.4"><circle cx="8.7" cy="8.7" r="7.7"/><circle cx="8.7" cy="8.7" r="3.6"/></svg>
<div class="t" style="left:1344.70px;top:366.74px;font-size:15px;color:#292a2e;font-weight:normal;letter-spacing:0.2px;">Partnership...</div>
<div class="a" style="left:346.30px;top:411.38px;width:11.80px;height:11.80px;border:1.5px solid #cfd2d7;border-radius:2px;background:#fff"></div>
<svg class="ic" style="left:386.45px;top:411.98px;stroke:#62666e;stroke-width:1.5" width="5" height="9.5" viewBox="0 0 5 9.5"><path d="M0 0 L4.55 4.8 L0 9.3"/></svg>
<svg class="ic" style="left:402.60px;top:408.28px;stroke:#bf63f3;stroke-width:1.6" width="14" height="17" viewBox="0 0 14 17"><path d="M9.06 0.9 L8.9 6.17 L12.9 7.03 L4.8 16 L4.9 10.75 L0.8 9.9 Z"/></svg>
<div class="t" style="left:493.20px;top:409.38px;font-size:15px;color:#6e7178;font-weight:normal;letter-spacing:0.38px;">TIC-004</div>
<div class="t" style="left:577.80px;top:409.38px;font-size:15px;color:#292a2e;font-weight:normal;letter-spacing:0.36px;">Highlight Partners</div>
<div class="a" style="left:884.1px;top:408.58px;width:90.7px;height:17px;border-radius:3px;background:#8fb8f6"></div>
<div class="t" style="left:889.20px;top:412.01px;font-size:11.9px;color:#292a2e;font-weight:bold;letter-spacing:-0.12px;">IN PROGRESS</div>
<div class="a" style="left:1004.60px;top:406.28px;width:21.50px;height:21.50px;border-radius:50%;overflow:hidden;background:#a6c6dc"><div class="a" style="left:28%;top:8%;width:66%;height:75%;border-radius:45% 50% 40% 40%;background:#2b2c33;"></div><div class="a" style="left:30%;top:38%;width:52%;height:58%;border-radius:45%;background:#e2b6a6;"></div><div class="a" style="left:30%;top:30%;width:56%;height:14%;border-radius:20%;background:#2b2c33;"></div></div>
<div class="t" style="left:1035.40px;top:409.38px;font-size:15px;color:#292a2e;font-weight:normal;letter-spacing:0.25px;">Jie Yan Song</div>
<div class="a" style="left:1189.3px;top:406.38px;width:67.5px;height:21px;border:1.7px solid #cf74f2;border-radius:3.5px"></div>
<div class="t" style="left:1194.00px;top:409.38px;font-size:15px;color:#292a2e;font-weight:normal;letter-spacing:0.48px;">partners</div>
<div class="a" style="left:346.30px;top:454.02px;width:11.80px;height:11.80px;border:1.5px solid #cfd2d7;border-radius:2px;background:#fff"></div>
<svg class="ic" style="left:386.45px;top:454.62px;stroke:#62666e;stroke-width:1.5" width="5" height="9.5" viewBox="0 0 5 9.5"><path d="M0 0 L4.55 4.8 L0 9.3"/></svg>
<svg class="ic" style="left:402.60px;top:450.92px;stroke:#bf63f3;stroke-width:1.6" width="14" height="17" viewBox="0 0 14 17"><path d="M9.06 0.9 L8.9 6.17 L12.9 7.03 L4.8 16 L4.9 10.75 L0.8 9.9 Z"/></svg>
<div class="t" style="left:493.20px;top:452.02px;font-size:15px;color:#6e7178;font-weight:normal;letter-spacing:0.38px;">TIC-007</div>
<div class="t" style="left:577.80px;top:452.02px;font-size:15px;color:#292a2e;font-weight:normal;letter-spacing:0.36px;">Outline Benefits</div>
<div class="a" style="left:884.1px;top:451.22px;width:44px;height:17px;border-radius:3px;background:#b3df72"></div>
<div class="t" style="left:889.20px;top:454.65px;font-size:11.9px;color:#292a2e;font-weight:bold;letter-spacing:-0.12px;">DONE</div>
<div class="a" style="left:1004.60px;top:448.92px;width:21.50px;height:21.50px;border-radius:50%;overflow:hidden;background:#a6c6dc"><div class="a" style="left:28%;top:8%;width:66%;height:75%;border-radius:45% 50% 40% 40%;background:#2b2c33;"></div><div class="a" style="left:30%;top:38%;width:52%;height:58%;border-radius:45%;background:#e2b6a6;"></div><div class="a" style="left:30%;top:30%;width:56%;height:14%;border-radius:20%;background:#2b2c33;"></div></div>
<div class="t" style="left:1035.40px;top:452.02px;font-size:15px;color:#292a2e;font-weight:normal;letter-spacing:0.25px;">Jie Yan Song</div>
<div class="a" style="left:1189.3px;top:449.02px;width:74.5px;height:21px;border:1.7px solid #3b7ee6;border-radius:3.5px"></div>
<div class="t" style="left:1194.00px;top:452.02px;font-size:15px;color:#292a2e;font-weight:normal;letter-spacing:0.48px;">feedback</div>
<svg class="" style="left:1316.10px;top:450.92px;fill:none;stroke:#f5a623;stroke-width:1.9" width="17.4" height="17.4" viewBox="0 0 17.4 17.4"><circle cx="8.7" cy="8.7" r="7.7"/><circle cx="8.7" cy="8.7" r="3.6"/></svg>
<div class="t" style="left:1344.70px;top:452.02px;font-size:15px;color:#292a2e;font-weight:normal;letter-spacing:0.2px;">Strengthen P...</div>
<div class="a" style="left:346.30px;top:496.66px;width:11.80px;height:11.80px;border:1.5px solid #cfd2d7;border-radius:2px;background:#fff"></div>
<svg class="ic" style="left:386.45px;top:497.26px;stroke:#62666e;stroke-width:1.5" width="5" height="9.5" viewBox="0 0 5 9.5"><path d="M0 0 L4.55 4.8 L0 9.3"/></svg>
<svg class="ic" style="left:402.60px;top:493.56px;stroke:#bf63f3;stroke-width:1.6" width="14" height="17" viewBox="0 0 14 17"><path d="M9.06 0.9 L8.9 6.17 L12.9 7.03 L4.8 16 L4.9 10.75 L0.8 9.9 Z"/></svg>
<div class="t" style="left:493.20px;top:494.66px;font-size:15px;color:#6e7178;font-weight:normal;letter-spacing:0.38px;">TIC-003</div>
<div class="t" style="left:577.80px;top:494.66px;font-size:15px;color:#292a2e;font-weight:normal;letter-spacing:0.36px;">Promote Charitable Contributions</div>
<div class="a" style="left:884.1px;top:493.86px;width:47px;height:17px;border-radius:3px;background:#dddee1"></div>
<div class="t" style="left:889.20px;top:497.29px;font-size:11.9px;color:#292a2e;font-weight:bold;letter-spacing:-0.12px;">TO DO</div>
<div class="a" style="left:1004.60px;top:491.56px;width:21.50px;height:21.50px;border-radius:50%;overflow:hidden;background:linear-gradient(90deg,#4a4c4f 0%,#a9adb0 35%,#b9c6d2 70%,#8fb0d0 100%)"><div class="a" style="left:0%;top:55%;width:100%;height:30%;border-radius:0;background:#5f7b2e;"></div><div class="a" style="left:22%;top:70%;width:60%;height:40%;border-radius:40% 40% 0 0;background:#1c1d2c;"></div><div class="a" style="left:30%;top:18%;width:36%;height:22%;border-radius:50% 50% 20% 20%;background:#2a2220;"></div><div class="a" style="left:32%;top:28%;width:34%;height:46%;border-radius:45%;background:#d2a58a;"></div><div class="a" style="left:42%;top:72%;width:14%;height:14%;border-radius:30%;background:#c8c0b8;"></div></div>
<div class="t" style="left:1035.40px;top:494.66px;font-size:15px;color:#292a2e;font-weight:normal;letter-spacing:0.25px;">Andrew Park</div>
<div class="a" style="left:346.30px;top:539.30px;width:11.80px;height:11.80px;border:1.5px solid #cfd2d7;border-radius:2px;background:#fff"></div>
<svg class="ic" style="left:386.45px;top:539.90px;stroke:#62666e;stroke-width:1.5" width="5" height="9.5" viewBox="0 0 5 9.5"><path d="M0 0 L4.55 4.8 L0 9.3"/></svg>
<svg class="ic" style="left:402.60px;top:536.20px;stroke:#bf63f3;stroke-width:1.6" width="14" height="17" viewBox="0 0 14 17"><path d="M9.06 0.9 L8.9 6.17 L12.9 7.03 L4.8 16 L4.9 10.75 L0.8 9.9 Z"/></svg>
<div class="t" style="left:493.20px;top:537.30px;font-size:15px;color:#6e7178;font-weight:normal;letter-spacing:0.38px;">TIC-005</div>
<div class="t" style="left:577.80px;top:537.30px;font-size:15px;color:#292a2e;font-weight:normal;letter-spacing:0.36px;">Exclusive Access for Partners</div>
<div class="a" style="left:884.1px;top:536.50px;width:90.7px;height:17px;border-radius:3px;background:#8fb8f6"></div>
<div class="t" style="left:889.20px;top:539.93px;font-size:11.9px;color:#292a2e;font-weight:bold;letter-spacing:-0.12px;">IN PROGRESS</div>
<div class="a" style="left:1004.60px;top:534.20px;width:21.50px;height:21.50px;border-radius:50%;overflow:hidden;background:#a6c6dc"><div class="a" style="left:28%;top:8%;width:66%;height:75%;border-radius:45% 50% 40% 40%;background:#2b2c33;"></div><div class="a" style="left:30%;top:38%;width:52%;height:58%;border-radius:45%;background:#e2b6a6;"></div><div class="a" style="left:30%;top:30%;width:56%;height:14%;border-radius:20%;background:#2b2c33;"></div></div>
<div class="t" style="left:1035.40px;top:537.30px;font-size:15px;color:#292a2e;font-weight:normal;letter-spacing:0.25px;">Jie Yan Song</div>
<div class="a" style="left:1189.3px;top:534.30px;width:67.5px;height:21px;border:1.7px solid #cf74f2;border-radius:3.5px"></div>
<div class="t" style="left:1194.00px;top:537.30px;font-size:15px;color:#292a2e;font-weight:normal;letter-spacing:0.48px;">partners</div>
<svg class="" style="left:1316.10px;top:536.20px;fill:none;stroke:#82b536;stroke-width:1.9" width="17.4" height="17.4" viewBox="0 0 17.4 17.4"><circle cx="8.7" cy="8.7" r="7.7"/><circle cx="8.7" cy="8.7" r="3.6"/></svg>
<div class="t" style="left:1344.70px;top:537.30px;font-size:15px;color:#292a2e;font-weight:normal;letter-spacing:0.2px;">Partnership...</div>
<div class="a" style="left:346.30px;top:581.94px;width:11.80px;height:11.80px;border:1.5px solid #cfd2d7;border-radius:2px;background:#fff"></div>
<svg class="ic" style="left:386.45px;top:582.54px;stroke:#62666e;stroke-width:1.5" width="5" height="9.5" viewBox="0 0 5 9.5"><path d="M0 0 L4.55 4.8 L0 9.3"/></svg>
<svg class="ic" style="left:402.60px;top:578.84px;stroke:#bf63f3;stroke-width:1.6" width="14" height="17" viewBox="0 0 14 17"><path d="M9.06 0.9 L8.9 6.17 L12.9 7.03 L4.8 16 L4.9 10.75 L0.8 9.9 Z"/></svg>
<div class="t" style="left:493.20px;top:579.94px;font-size:15px;color:#6e7178;font-weight:normal;letter-spacing:0.38px;">TIC-006</div>
<div class="t" style="left:577.80px;top:579.94px;font-size:15px;color:#292a2e;font-weight:normal;letter-spacing:0.36px;">Training Sessions</div>
<div class="a" style="left:884.1px;top:579.14px;width:44px;height:17px;border-radius:3px;background:#b3df72"></div>
<div class="t" style="left:889.20px;top:582.57px;font-size:11.9px;color:#292a2e;font-weight:bold;letter-spacing:-0.12px;">DONE</div>
<div class="a" style="left:1004.60px;top:576.84px;width:21.50px;height:21.50px;border-radius:50%;overflow:hidden;background:linear-gradient(90deg,#8a8580 0%,#d8d4cc 50%,#7a746e 100%)"><div class="a" style="left:20%;top:10%;width:62%;height:40%;border-radius:50% 50% 30% 30%;background:#1e1816;"></div><div class="a" style="left:25%;top:28%;width:52%;height:66%;border-radius:45%;background:#d8a68c;"></div><div class="a" style="left:22%;top:30%;width:12%;height:22%;border-radius:40%;background:#1e1816;"></div><div class="a" style="left:35%;top:90%;width:30%;height:15%;border-radius:0;background:#5a8ad0;"></div></div>
<div class="t" style="left:1035.40px;top:579.94px;font-size:15px;color:#292a2e;font-weight:normal;letter-spacing:0.25px;">Taha Kandemir</div>
<div class="a" style="left:1189.3px;top:576.94px;width:74.5px;height:21px;border:1.7px solid #3b7ee6;border-radius:3.5px"></div>
<div class="t" style="left:1194.00px;top:579.94px;font-size:15px;color:#292a2e;font-weight:normal;letter-spacing:0.48px;">feedback</div>
<div class="a" style="left:346.30px;top:624.58px;width:11.80px;height:11.80px;border:1.5px solid #cfd2d7;border-radius:2px;background:#fff"></div>
<svg class="ic" style="left:386.45px;top:625.18px;stroke:#62666e;stroke-width:1.5" width="5" height="9.5" viewBox="0 0 5 9.5"><path d="M0 0 L4.55 4.8 L0 9.3"/></svg>
<svg class="ic" style="left:402.60px;top:621.48px;stroke:#bf63f3;stroke-width:1.6" width="14" height="17" viewBox="0 0 14 17"><path d="M9.06 0.9 L8.9 6.17 L12.9 7.03 L4.8 16 L4.9 10.75 L0.8 9.9 Z"/></svg>
<div class="t" style="left:493.20px;top:622.58px;font-size:15px;color:#6e7178;font-weight:normal;letter-spacing:0.38px;">TIC-008</div>
<div class="t" style="left:577.80px;top:622.58px;font-size:15px;color:#292a2e;font-weight:normal;letter-spacing:0.36px;">Feedback Mechanism</div>
<div class="a" style="left:884.1px;top:621.78px;width:47px;height:17px;border-radius:3px;background:#dddee1"></div>
<div class="t" style="left:889.20px;top:625.21px;font-size:11.9px;color:#292a2e;font-weight:bold;letter-spacing:-0.12px;">TO DO</div>
<div class="a" style="left:1004.60px;top:619.48px;width:21.50px;height:21.50px;border-radius:50%;overflow:hidden;background:linear-gradient(90deg,#4a4c4f 0%,#a9adb0 35%,#b9c6d2 70%,#8fb0d0 100%)"><div class="a" style="left:0%;top:55%;width:100%;height:30%;border-radius:0;background:#5f7b2e;"></div><div class="a" style="left:22%;top:70%;width:60%;height:40%;border-radius:40% 40% 0 0;background:#1c1d2c;"></div><div class="a" style="left:30%;top:18%;width:36%;height:22%;border-radius:50% 50% 20% 20%;background:#2a2220;"></div><div class="a" style="left:32%;top:28%;width:34%;height:46%;border-radius:45%;background:#d2a58a;"></div><div class="a" style="left:42%;top:72%;width:14%;height:14%;border-radius:30%;background:#c8c0b8;"></div></div>
<div class="t" style="left:1035.40px;top:622.58px;font-size:15px;color:#292a2e;font-weight:normal;letter-spacing:0.25px;">Andrew Park</div>
<div class="a" style="left:343.90px;top:660.00px;width:73.10px;height:25.40px;background:#f0f0f1;border-radius:3px"></div>
<div class="a" style="left:352.9px;top:665px;width:15.1px;height:15px;border:1.9px solid #2b6fe0;border-radius:3px"></div>
<svg class="ic" style="left:356.50px;top:669.00px;stroke:#2b6fe0;stroke-width:1.8" width="8" height="7" viewBox="0 0 8 7"><path d="M0.9 4.35 L2.9 5.75 L7.1 1.7"/></svg>
<div class="t" style="left:376.30px;top:665.30px;font-size:15px;color:#292a2e;font-weight:normal;letter-spacing:0.3px;">Task</div>
<div class="t" style="left:422.00px;top:665.30px;font-size:15px;color:#292a2e;font-weight:normal;letter-spacing:0.36px;">Digital campaign</div>
<div class="a" style="left:540.30px;top:662.20px;width:1.20px;height:20.80px;background:#292a2e"></div>
<div class="a" style="left:1412.4px;top:659.8px;width:89.6px;height:25.8px;border-radius:3.5px;background:#1868db;overflow:hidden"><div class="a" style="left:61.3px;top:1.7px;width:21.6px;height:21.4px;background:#1762d2"></div></div>
<div class="t" style="left:1421.80px;top:665.40px;font-size:15px;color:#ffffff;font-weight:normal;letter-spacing:0.3px;">Create</div>
<svg class="" style="left:1481.00px;top:668.50px;fill:none;stroke:#fff;stroke-width:1.3;stroke-linecap:round;stroke-linejoin:round" width="8" height="9" viewBox="0 0 8 9"><path d="M6.9 0.7 V4.9 H1.2 M3.3 2.9 L1.1 4.9 L3.3 7"/></svg>
<svg class="" style="left:396.00px;top:674.00px;" width="40" height="40" viewBox="0 0 40 40"><path d="M13.4 5 C11.6 5 10.6 6.4 10.9 8.4 L13.4 21.6 L8.8 18.3 C6.9 17 4.3 18.4 5 20.8 C5.3 21.8 6 22.6 6.8 23.5 L15.5 33.8 L15.8 37 L22.9 37 L25.3 34.7 L27.7 37 L30.6 37 L31 32.6 C33.6 29.2 35.3 26.8 35.3 22.6 L35.3 17.4 C35.3 15 31.3 14.6 30.6 17.6 L30.4 15.8 C30 12.9 25.4 12.6 24.4 16.6 L24.3 16.9 C23.9 12.5 19 12.3 18.3 16.4 L18.1 17.2 L16.5 8.3 C16.2 6.3 15 5 13.4 5 Z" fill="#fff" stroke="#000" stroke-width="1.9" stroke-linejoin="round"/><path d="M19.8 23.6 V30.8 M24.1 23.6 V30.8 M28.4 23.6 V30.8" stroke="#000" stroke-width="1.6" stroke-linecap="butt"/></svg>
</body></html>
